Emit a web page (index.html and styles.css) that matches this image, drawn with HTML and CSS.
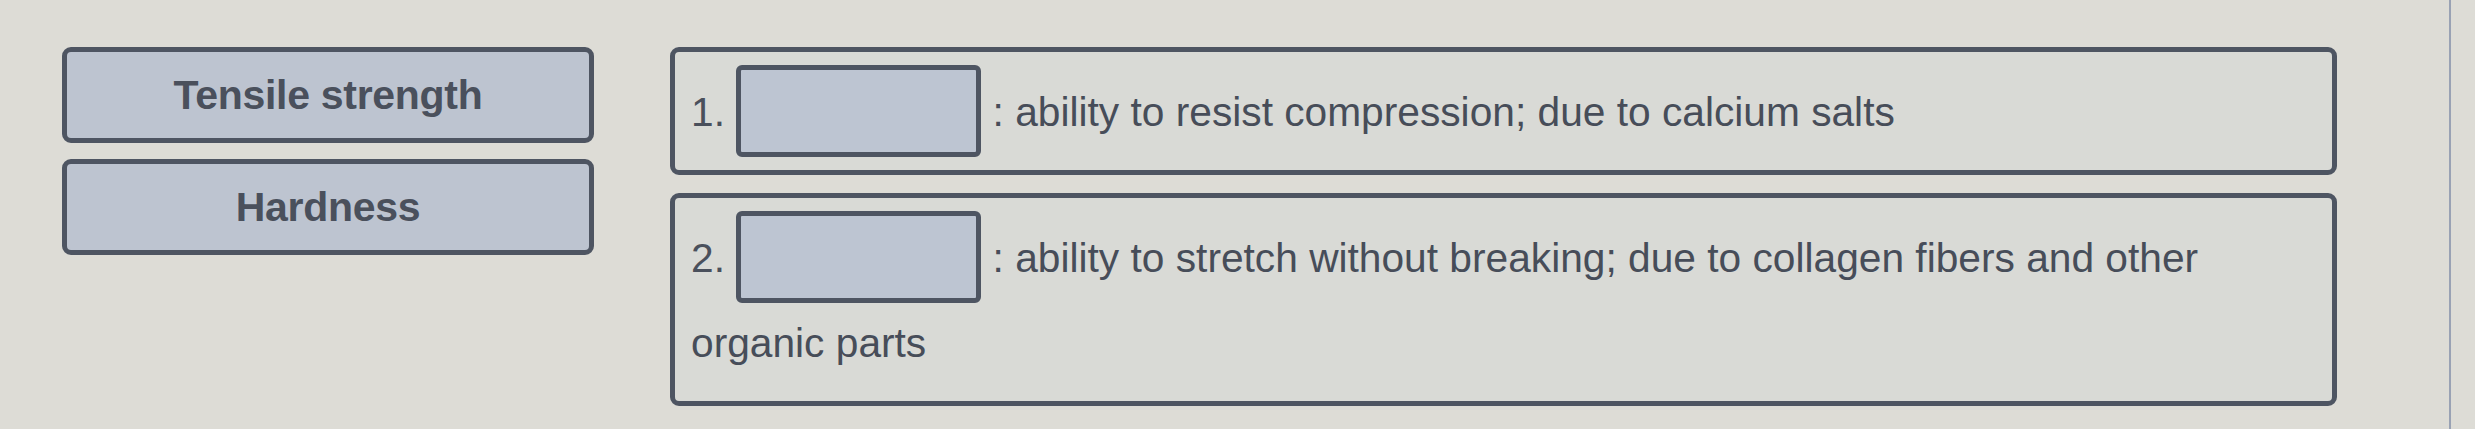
FILE: index.html
```html
<!DOCTYPE html>
<html lang="en">
<head>
<meta charset="utf-8">
<title>Bone properties</title>
<link rel="stylesheet" href="styles.css">
</head>
<body>
<main class="board">
  <section class="bank">
    <div class="chip">Tensile strength</div>
    <div class="chip">Hardness</div>
  </section>
  <section class="targets">
    <div class="target">
      <span class="num">1.</span> <span class="slot"></span> : ability to resist compression; due to calcium salts
    </div>
    <div class="target target-tall">
      <span class="num">2.</span> <span class="slot"></span> : ability to stretch without breaking; due to collagen fibers and other organic parts
    </div>
  </section>
  <div class="edge"></div>
</main>
</body>
</html>
```

FILE: styles.css
```css
html, body {
  margin: 0;
  padding: 0;
}

body {
  width: 2475px;
  height: 429px;
  overflow: hidden;
  background: #dddcd6;
  font-family: "Liberation Sans", Arial, sans-serif;
  color: #474d59;
}

.board {
  display: flex;
  align-items: flex-start;
  height: 100%;
  padding: 47px 0 0 62px;
  box-sizing: border-box;
}

/* draggable answer chips */
.bank {
  display: flex;
  flex-direction: column;
  gap: 16px;
  width: 532px;
  flex-shrink: 0;
}

.chip {
  height: 96px;
  box-sizing: border-box;
  display: flex;
  align-items: center;
  justify-content: center;
  background: #bdc4d0;
  border: 5px solid #4e5562;
  border-radius: 9px;
  font-size: 41px;
  font-weight: bold;
  color: #4a505c;
  letter-spacing: -0.3px;
}

/* numbered statements with drop slots */
.targets {
  display: flex;
  flex-direction: column;
  gap: 18px;
  width: 1667px;
  margin-left: 76px;
  flex-shrink: 0;
}

.target {
  background: #d9dad6;
  border: 5px solid #4e5562;
  border-radius: 9px;
  padding: 13px 14px 13px 16px;
  font-size: 40.7px;
  line-height: 80px;
}

.target-tall {
  padding-bottom: 18px;
}

.num {
  color: #4a505c;
}

.slot {
  display: inline-block;
  width: 245px;
  height: 92px;
  box-sizing: border-box;
  vertical-align: -31px;
  background: #bdc5d2;
  border: 5px solid #4e5562;
  border-radius: 6px;
}

.edge {
  width: 2px;
  align-self: stretch;
  margin: -47px 0 0 112px;
  background: #99a2b4;
}
```
